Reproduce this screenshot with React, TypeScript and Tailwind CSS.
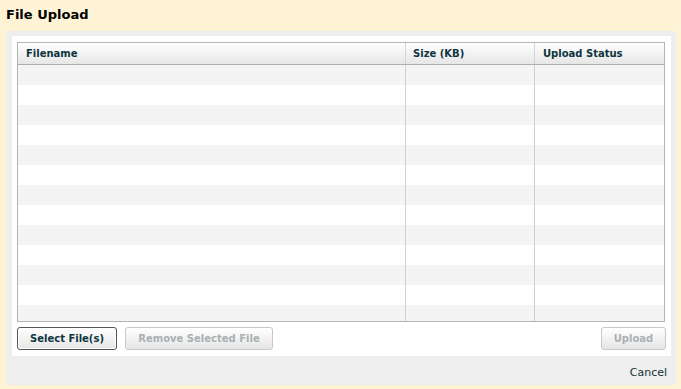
import type { ReactNode } from "react";

const ROWS = Array.from({ length: 13 }, (_, i) => i);

function Btn({ children, disabled, className = "" }: { children: ReactNode; disabled?: boolean; className?: string }) {
  return (
    <button
      disabled={disabled}
      className={
        "h-[23px] rounded-[3px] border bg-gradient-to-b from-white to-[#e6e6e6] text-[10px] font-bold leading-none " +
        (disabled ? "border-[#c8c8c8] text-[#a9b0b2]" : "border-[#555] text-[#0d3540] shadow-[inset_0_0_0_1px_#fff]") +
        " " +
        className
      }
    >
      {children}
    </button>
  );
}

export default function App() {
  return (
    <div className="min-h-[389px] w-[681px] bg-[#fff3d5] font-['DejaVu_Sans',Verdana,sans-serif]">
      <div className="h-[31px] pl-[6px] pt-[7px] text-[13px] font-bold leading-[16px] text-black">File Upload</div>

      <div className="ml-[6px] h-[354px] w-[670px] bg-[#eeeeee] pl-[6px] pr-[5px] pt-[5px]">
        <div className="h-[320px] bg-white px-[5px] pt-[6px]">
          {/* file table */}
          <div className="h-[280px] w-[648px] overflow-hidden border border-[#b4b4b4]">
            <div className="flex h-[22px] border-b border-[#aeaeae] bg-gradient-to-b from-white to-[#e6e6e6] text-[10px] font-bold text-[#0d3540]">
              <div className="flex w-[388px] items-center border-r border-[#d4d4d4] pl-[8px]">Filename</div>
              <div className="flex w-[129px] items-center border-r border-[#d4d4d4] pl-[7px]">Size (KB)</div>
              <div className="flex flex-1 items-center pl-[8px]">Upload Status</div>
            </div>
            {ROWS.map((i) => (
              <div key={i} className={"flex h-[20px] " + (i % 2 === 0 ? "bg-[#f4f4f4]" : "bg-white")}>
                <div className="w-[388px] border-r border-[#cfcfcf]" />
                <div className="w-[129px] border-r border-[#cfcfcf]" />
                <div className="flex-1" />
              </div>
            ))}
          </div>

          <div className="mt-[5px] flex items-center">
            <Btn className="w-[100px]">Select File(s)</Btn>
            <Btn disabled className="ml-[8px] w-[148px]">Remove Selected File</Btn>
            <Btn disabled className="ml-auto w-[65px]">Upload</Btn>
          </div>
        </div>

        <div className="flex justify-end pr-[4px] pt-[10px] text-[11px] leading-[14px] text-[#13323a]">
          <span>Cancel</span>
        </div>
      </div>
    </div>
  );
}
